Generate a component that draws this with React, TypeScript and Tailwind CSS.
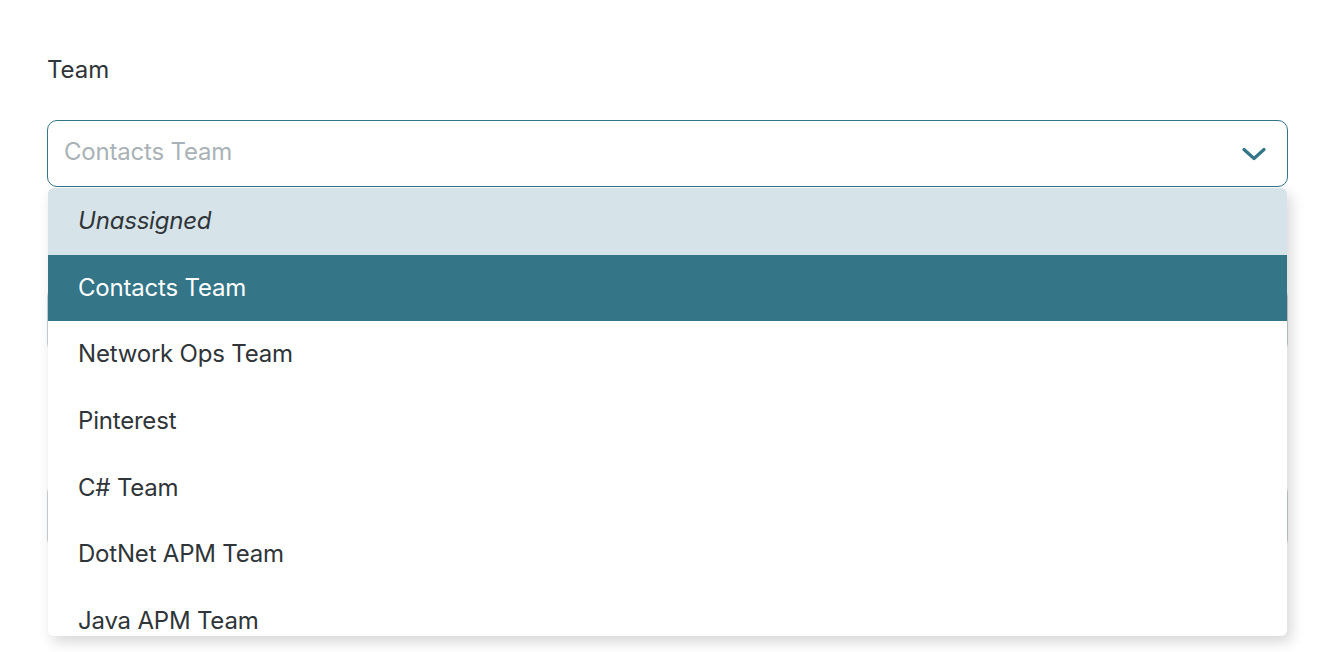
const teams = [
  "Unassigned",
  "Contacts Team",
  "Network Ops Team",
  "Pinterest",
  "C# Team",
  "DotNet APM Team",
  "Java APM Team",
];

function Chevron() {
  return (
    <svg width="24" height="14" viewBox="0 0 24 14" fill="none">
      <path
        d="M2 2.5l10 9 10-9"
        stroke="#347587"
        strokeWidth="3.2"
        strokeLinecap="round"
        strokeLinejoin="round"
      />
    </svg>
  );
}

export default function App() {
  return (
    <div
      className="min-h-[652px] bg-white pl-[47px] pr-[36px] pt-[55px]"
      style={{ fontFamily: "Inter, 'Noto Sans', sans-serif" }}
    >
      <div className="relative">
        <p className="text-[24px] leading-[30px] text-[#2f3538]">Team</p>
        <div className="mt-[35px] flex h-[67px] items-center justify-between rounded-[10px] border border-[#347587] pl-[16px] pr-[21px]">
          <span className="-mt-[4px] text-[24px] tracking-[-0.2px] text-[#a9b2b6]">
            Contacts Team
          </span>
          <Chevron />
        </div>

        {/* fields below, covered by the open list */}
        <div className="mt-[100px] h-[66px] rounded-[10px] border border-[#c9d0d3]" />
        <div className="mt-[130px] h-[66px] rounded-[10px] border border-[#c9d0d3]" />

        <div className="absolute left-[1px] right-[1px] top-[133px] h-[448px] overflow-hidden rounded-[6px] bg-white shadow-[4px_6px_14px_rgba(0,0,0,0.16)]">
          {teams.map((t, i) => (
            <div
              key={t}
              className={`flex h-[66.6px] items-center px-[30px] text-[24px] tracking-[-0.2px] ${
                i === 0
                  ? "bg-[#d6e3e8] italic text-[#2f3538]"
                  : i === 1
                  ? "bg-[#347587] text-white"
                  : "text-[#2f3538]"
              }`}
            >
              {t}
            </div>
          ))}
        </div>
      </div>
    </div>
  );
}
